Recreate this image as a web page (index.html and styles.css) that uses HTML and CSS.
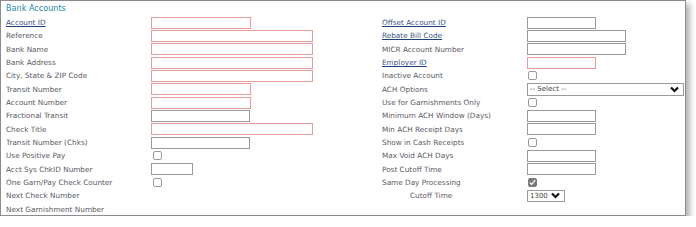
FILE: index.html
```html
<!DOCTYPE html>
<html>
<head>
    <title>Bank Accounts</title>
    <link rel="stylesheet" href="styles.css">
</head>
<body>

    <div class="panel">
        <div class="title">Bank Accounts</div>
        <div class="grid">
            <!-- row 1 -->
            <a class="lbl link">Account ID</a>
            <div class="ctl"><input class="box req w100" type="text"></div>
            <a class="lbl link">Offset Account ID</a>
            <div class="ctl"><input class="box w69" type="text"></div>

            <span class="lbl">Reference</span>
            <div class="ctl"><input class="box req w162" type="text"></div>
            <a class="lbl link">Rebate Bill Code</a>
            <div class="ctl"><input class="box w99" type="text"></div>

            <span class="lbl">Bank Name</span>
            <div class="ctl"><input class="box req w162" type="text"></div>
            <span class="lbl">MICR Account Number</span>
            <div class="ctl"><input class="box w99" type="text"></div>

            <span class="lbl">Bank Address</span>
            <div class="ctl"><input class="box req w162" type="text"></div>
            <a class="lbl link">Employer ID</a>
            <div class="ctl"><input class="box req w69" type="text"></div>

            <span class="lbl">City, State &amp; ZIP Code</span>
            <div class="ctl"><input class="box req w162" type="text"></div>
            <span class="lbl">Inactive Account</span>
            <div class="ctl"><input class="chk" type="checkbox"></div>

            <span class="lbl">Transit Number</span>
            <div class="ctl"><input class="box req w100" type="text"></div>
            <span class="lbl">ACH Options</span>
            <div class="ctl">
                <div class="sel wide">
                    <span>-- Select --</span>
                    <svg width="9" height="7" viewBox="0 0 9 7"><polyline points="1,1.5 4.5,5 8,1.5" fill="none" stroke="#111" stroke-width="2.2"/></svg>
                </div>
            </div>

            <span class="lbl">Account Number</span>
            <div class="ctl"><input class="box req w100" type="text"></div>
            <span class="lbl">Use for Garnishments Only</span>
            <div class="ctl"><input class="chk" type="checkbox"></div>

            <span class="lbl">Fractional Transit</span>
            <div class="ctl"><input class="box w99" type="text"></div>
            <span class="lbl">Minimum ACH Window (Days)</span>
            <div class="ctl"><input class="box w69" type="text"></div>

            <span class="lbl">Check Title</span>
            <div class="ctl"><input class="box req w162" type="text"></div>
            <span class="lbl">Min ACH Receipt Days</span>
            <div class="ctl"><input class="box w69" type="text"></div>

            <span class="lbl">Transit Number (Chks)</span>
            <div class="ctl"><input class="box w99" type="text"></div>
            <span class="lbl">Show in Cash Receipts</span>
            <div class="ctl"><input class="chk" type="checkbox"></div>

            <span class="lbl">Use Positive Pay</span>
            <div class="ctl"><input class="chk left" type="checkbox"></div>
            <span class="lbl">Max Void ACH Days</span>
            <div class="ctl"><input class="box w69" type="text"></div>

            <span class="lbl">Acct Sys ChkID Number</span>
            <div class="ctl"><input class="box w42" type="text"></div>
            <span class="lbl">Post Cutoff Time</span>
            <div class="ctl"><input class="box w69" type="text"></div>

            <span class="lbl">One Garn/Pay Check Counter</span>
            <div class="ctl"><input class="chk left" type="checkbox"></div>
            <span class="lbl">Same Day Processing</span>
            <div class="ctl"><input class="chk" type="checkbox" checked></div>

            <span class="lbl">Next Check Number</span>
            <div class="ctl"></div>
            <span class="lbl indent">Cutoff Time</span>
            <div class="ctl">
                <div class="sel small">
                    <span>1300</span>
                    <svg width="9" height="7" viewBox="0 0 9 7"><polyline points="1,1.5 4.5,5 8,1.5" fill="none" stroke="#111" stroke-width="2.2"/></svg>
                </div>
            </div>

            <span class="lbl">Next Garnishment Number</span>
        </div>
    </div>

</body>
</html>
```

FILE: styles.css
```css
html, body {
    margin: 0;
    background: #FFF;
}
body {
    font-family: "DejaVu Sans", Verdana, sans-serif;
}
.panel {
    width: 686px; height: 216px;
    box-sizing: border-box;
    border: 1px solid #8c8c8c;
    box-shadow: 4px 4px 6px rgba(0,0,0,.3);
    padding: 0 0 0 5px;
}
.title {
    height: 15px;
    line-height: 15px;
    font-size: 9px;
    font-stretch: condensed;
    color: #2589a9;
}
.grid {
    display: grid;
    grid-template-columns: 145px 231px 145px auto;
    grid-auto-rows: 13.33px;
    align-items: center;
}
.lbl {
    font-size: 7.3px;
    color: #5a5a5f;
    white-space: nowrap;
}
.lbl.link {
    color: #3a5585;
    text-decoration: underline;
    text-decoration-color: #1d3f80;
}
.lbl.indent {
    padding-left: 28px;
}
.ctl {
    display: flex;
    align-items: center;
    height: 100%;
}
.box {
    box-sizing: border-box;
    height: 12px;
    margin: 0; padding: 0;
    border: 1px solid #9a9a9a;
    background: #FFF;
    outline: none;
}
.box.req {border-color: #e59c9c;}
.w42 {width: 42px;}
.w69 {width: 69px;}
.w99 {width: 99px;}
.w100 {width: 100px;}
.w162 {width: 162px;}

.chk {
    -webkit-appearance: none;
            appearance: none;
    box-sizing: border-box;
    width: 9px; height: 9px;
    margin: 0 0 0 1px;
    border: 1px solid #9a9a9a;
    border-radius: 2px;
    background: #FFF;
}
.chk.left {margin-left: 2px;}
.chk:checked {
    border-color: #7a7a7a;
    background: #7a7a7a url("data:image/svg+xml;utf8,<svg xmlns='http://www.w3.org/2000/svg' width='9' height='9' viewBox='0 0 9 9'><polyline points='1.8,4.6 3.6,6.4 7.2,2.2' fill='none' stroke='white' stroke-width='1.3'/></svg>") center no-repeat;
}

.sel {
    box-sizing: border-box;
    height: 12px;
    border: 1px solid #9a9a9a;
    display: flex;
    align-items: center;
    justify-content: space-between;
    padding: 0 3px 0 2px;
    font-size: 7px;
    color: #444;
}
.sel.wide {width: 157px; height: 13px; padding-right: 4px;}
.sel.small {width: 38px; justify-content: flex-start; gap: 3px;}
.sel svg {display: block;}
```
